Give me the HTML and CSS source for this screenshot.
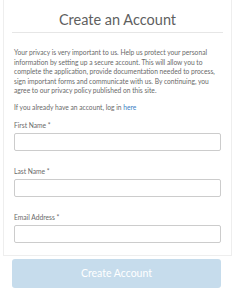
FILE: index.html
```html
<!DOCTYPE html>
<html lang="en">
<head>
    <meta charset="UTF-8">
    <meta name="viewport" content="width=device-width, initial-scale=1.0">
    <title>Create an Account</title>
    <link rel="stylesheet" href="styles.css">
</head>
<body>
    <!-- Card -->
    <div class="card">
        <h1 class="title">Create an Account</h1>
        <div class="card-body">
            <p class="intro">Your privacy is very important to us. Help us protect your personal information by setting up a secure account. This will allow you to complete the application, provide documentation needed to process, sign important forms and communicate with us. By continuing, you agree to our privacy policy published on this site.</p>
            <p class="login">If you already have an account, log in <a href="#">here</a></p>

            <label class="field">
                <span class="field-label">First Name *</span>
                <input type="text" class="field-input">
            </label>
            <label class="field">
                <span class="field-label">Last Name *</span>
                <input type="text" class="field-input">
            </label>
            <label class="field">
                <span class="field-label">Email Address *</span>
                <input type="email" class="field-input">
            </label>
        </div>
    </div>

    <button class="submit-btn" disabled>Create Account</button>
</body>
</html>
```

FILE: styles.css
```css
/* Reset */
* {
    margin: 0;
    padding: 0;
    box-sizing: border-box;
    font-family: 'Lato', sans-serif;
}

body {
    background: #fff;
    color: #666;
    width: 235px;
}

/* Card */
.card {
    margin: 0 3px;
    border: 1px solid #eee;
    border-top: none;
    padding-bottom: 12px;
}

.title {
    font-size: 14.5px;
    font-weight: 400;
    color: #5f5f5f;
    text-align: center;
    padding-top: 11px;
    height: 33px;
    margin: 0 8px;
    border-bottom: 1px solid #e6e6e6;
}

.card-body {
    padding: 15px 10px 0 10px;
}

.intro {
    font-size: 6.7px;
    line-height: 9.6px;
    color: #6a6a6a;
}

.login {
    font-size: 6.7px;
    line-height: 9.6px;
    margin-top: 7px;
    color: #6a6a6a;
}

.login a {
    color: #3b7fc4;
    text-decoration: none;
}

/* Fields */
.field {
    display: flex;
    flex-direction: column;
    margin-top: 8px;
}

.field + .field {
    margin-top: 16px;
}

.field-label {
    font-size: 6.7px;
    line-height: 9px;
    margin-bottom: 3px;
    color: #6a6a6a;
}

.field-input {
    height: 18px;
    border: 1px solid #ccc;
    border-radius: 2px;
    background: #fff;
}

/* Button */
.submit-btn {
    display: block;
    width: 209px;
    height: 29px;
    margin: 3px 0 0 12px;
    border: none;
    border-radius: 3px;
    background: #c6dcec;
    color: #fff;
    font-size: 10.5px;
}
```
